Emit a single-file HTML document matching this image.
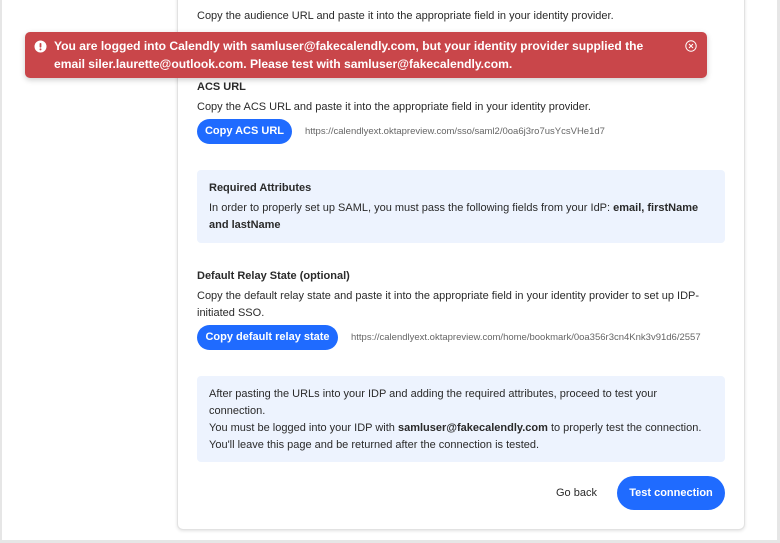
<!DOCTYPE html>
<html><head><meta charset="utf-8"><style>
*{margin:0;padding:0;box-sizing:border-box}
body{width:780px;height:543px;background:#e6e6e6;position:relative;overflow:hidden;font-family:"Liberation Sans",sans-serif;color:#2a2a2a}
.page{position:absolute;left:2px;top:0;width:775px;height:540px;background:#fff}
.card{position:absolute;left:177px;top:-10px;width:568px;height:540px;background:#fff;border:1px solid #e2e2e2;border-radius:6px;box-shadow:0 1px 3px rgba(0,0,0,.12)}
.t{position:absolute;font-size:11px;white-space:nowrap;line-height:17px}
.b{font-weight:bold}
.btn{position:absolute;background:#1f6bff;color:#fff;font-weight:bold;font-size:11px;border-radius:13px;text-align:center;line-height:25px;height:25px}
.url{position:absolute;font-size:9.5px;color:#666;white-space:nowrap}
.box{position:absolute;left:197px;width:528px;background:#edf3fe;border-radius:4px}
.toast{position:absolute;left:25px;top:32px;width:682px;height:46px;background:#c9464a;border-radius:5px;box-shadow:0 2px 6px rgba(0,0,0,.2);color:#fff;font-weight:bold;font-size:12.1px;line-height:18px;padding:5px 0 0 29px;white-space:nowrap}
</style></head><body>
<div class="page"></div>
<div class="card"></div>
<div class="t" style="left:197px;top:8px">Copy the audience URL and paste it into the appropriate field in your identity provider.</div>
<div class="btn" style="left:197px;top:36px;width:120px"></div>
<div class="t b" style="left:197px;top:79px">ACS URL</div>
<div class="t" style="left:197px;top:99px">Copy the ACS URL and paste it into the appropriate field in your identity provider.</div>
<div class="btn" style="left:197px;top:119px;width:95px">Copy ACS URL</div>
<div class="url" style="left:305px;top:126px">https://calendlyext.oktapreview.com/sso/saml2/0oa6j3ro7usYcsVHe1d7</div>
<div class="box" style="top:170px;height:73px"></div>
<div class="t b" style="left:209px;top:180px">Required Attributes</div>
<div class="t" style="left:209px;top:200px">In order to properly set up SAML, you must pass the following fields from your IdP: <b>email, firstName</b></div>
<div class="t b" style="left:209px;top:217px">and lastName</div>
<div class="t b" style="left:197px;top:268px">Default Relay State (optional)</div>
<div class="t" style="left:197px;top:288px">Copy the default relay state and paste it into the appropriate field in your identity provider to set up IDP-</div>
<div class="t" style="left:197px;top:305px">initiated SSO.</div>
<div class="btn" style="left:197px;top:325px;width:141px">Copy default relay state</div>
<div class="url" style="left:351px;top:332px">https://calendlyext.oktapreview.com/home/bookmark/0oa356r3cn4Knk3v91d6/2557</div>
<div class="box" style="top:376px;height:86px"></div>
<div class="t" style="left:209px;top:386px">After pasting the URLs into your IDP and adding the required attributes, proceed to test your</div>
<div class="t" style="left:209px;top:403px">connection.</div>
<div class="t" style="left:209px;top:420px">You must be logged into your IDP with <b>samluser@fakecalendly.com</b> to properly test the connection.</div>
<div class="t" style="left:209px;top:437px">You'll leave this page and be returned after the connection is tested.</div>
<div class="t" style="left:556px;top:485px">Go back</div>
<div class="btn" style="left:617px;top:476px;width:108px;height:34px;line-height:34px;border-radius:17px">Test connection</div>
<div class="toast">You are logged into Calendly with samluser@fakecalendly.com, but your identity provider supplied the<br>email siler.laurette@outlook.com. Please test with samluser@fakecalendly.com.
<svg style="position:absolute;left:9px;top:8px" width="13" height="13" viewBox="0 0 13 13"><circle cx="6.5" cy="6.5" r="6" fill="#fff"/><rect x="5.6" y="3" width="1.8" height="4.6" rx=".8" fill="#c9464a"/><circle cx="6.5" cy="9.4" r="1" fill="#c9464a"/></svg>
<svg style="position:absolute;left:660px;top:8px" width="12" height="12" viewBox="0 0 12 12"><circle cx="6" cy="6" r="5.2" fill="none" stroke="#fff" stroke-width="1"/><path d="M4 4L8 8M8 4L4 8" stroke="#fff" stroke-width="1"/></svg>
</div>
</body></html>
